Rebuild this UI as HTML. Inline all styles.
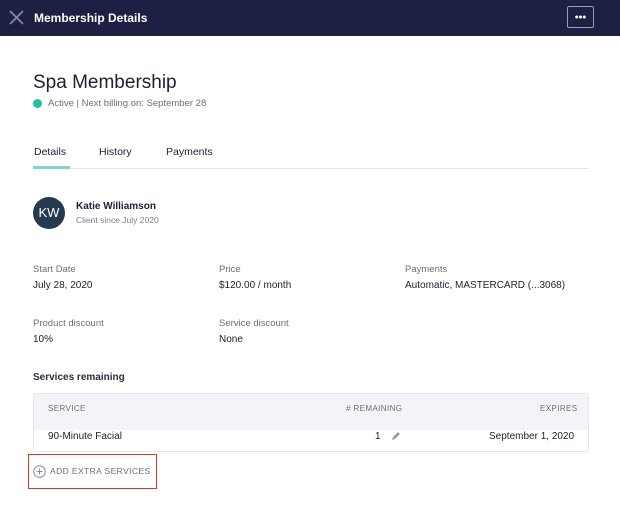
<!DOCTYPE html><html><head><style>
*{margin:0;padding:0;box-sizing:border-box}
body{width:620px;height:514px;background:#fff;font-family:"Liberation Sans",sans-serif;color:#1d1f33;position:relative;overflow:hidden}
.a{position:absolute;white-space:nowrap}
.lab{font-size:9.5px;color:#6b6e80}
.val{font-size:10px;color:#1d1f33}
</style></head><body>
<div class="a" style="left:0;top:0;width:620px;height:36px;background:#1d2042"></div>
<svg class="a" style="left:9px;top:10px" width="15" height="15" viewBox="0 0 15 15"><path d="M1 1L14 14M14 1L1 14" stroke="#8a8ca0" stroke-width="1.6"/></svg>
<div class="a" style="left:34px;top:11px;font-size:12px;font-weight:bold;color:#fff">Membership Details</div>
<div class="a" style="left:567px;top:6px;width:27px;height:22px;border:1px solid #9a9cb0;border-radius:2px"></div>
<svg class="a" style="left:575px;top:15px" width="11" height="4" viewBox="0 0 11 4"><circle cx="1.7" cy="2" r="1.5" fill="#fff"/><circle cx="5.5" cy="2" r="1.5" fill="#fff"/><circle cx="9.3" cy="2" r="1.5" fill="#fff"/></svg>
<div class="a" style="left:33px;top:72px;font-size:19px">Spa Membership</div>
<div class="a" style="left:33px;top:99px;width:9px;height:9px;border-radius:50%;background:#26c0a0"></div>
<div class="a" style="left:48px;top:98px;font-size:9.5px;color:#6b6e80">Active | Next billing on: September 28</div>
<div class="a" style="left:34px;top:146px;font-size:10.5px">Details</div>
<div class="a" style="left:99px;top:146px;font-size:10.5px">History</div>
<div class="a" style="left:166px;top:146px;font-size:10.5px">Payments</div>
<div class="a" style="left:33px;top:168px;width:556px;height:1px;background:#e6e7ec"></div>
<div class="a" style="left:33px;top:166px;width:37px;height:3px;background:#7fd3d3"></div>
<div class="a" style="left:33px;top:197px;width:32px;height:32px;border-radius:50%;background:#253a4e;color:#fff;font-size:13px;text-align:center;line-height:32px">KW</div>
<div class="a" style="left:76px;top:201px;font-size:10px;font-weight:bold">Katie Williamson</div>
<div class="a" style="left:76px;top:215px;font-size:8.5px;color:#7a7d90">Client since July 2020</div>
<div class="a lab" style="left:33px;top:264px">Start Date</div>
<div class="a val" style="left:33px;top:280px">July 28, 2020</div>
<div class="a lab" style="left:219px;top:264px">Price</div>
<div class="a val" style="left:219px;top:280px">$120.00 / month</div>
<div class="a lab" style="left:405px;top:264px">Payments</div>
<div class="a val" style="left:405px;top:280px">Automatic, MASTERCARD (...3068)</div>
<div class="a lab" style="left:33px;top:318px">Product discount</div>
<div class="a val" style="left:33px;top:334px">10%</div>
<div class="a lab" style="left:219px;top:318px">Service discount</div>
<div class="a val" style="left:219px;top:334px">None</div>
<div class="a" style="left:33px;top:372px;font-size:10px;font-weight:bold;color:#2a2c40">Services remaining</div>
<div class="a" style="left:33px;top:393px;width:556px;height:59px;border:1px solid #e6e7ec;border-radius:3px;overflow:hidden">
<div style="height:36px;background:#f3f4f7"></div></div>
<div class="a" style="left:48px;top:404px;font-size:8px;color:#6b6e80;letter-spacing:.4px">SERVICE</div>
<div class="a" style="left:346px;top:404px;font-size:8px;color:#6b6e80;letter-spacing:.4px">#&nbsp;REMAINING</div>
<div class="a" style="left:540px;top:404px;font-size:8px;color:#6b6e80;letter-spacing:.4px">EXPIRES</div>
<div class="a val" style="left:48px;top:431px">90-Minute Facial</div>
<div class="a val" style="left:375px;top:431px">1</div>
<svg class="a" style="left:390px;top:431px" width="11" height="11" viewBox="0 0 11 11"><path d="M2 9L3 6L8 1L10 3L5 8Z" fill="#9a9cab"/></svg>
<div class="a val" style="left:489px;top:431px">September 1, 2020</div>
<div class="a" style="left:28px;top:454px;width:129px;height:35px;border:1.5px solid #e8312a"></div>
<svg class="a" style="left:33px;top:465px" width="13" height="13" viewBox="0 0 13 13"><circle cx="6.5" cy="6.5" r="5.8" fill="none" stroke="#8a8ca0" stroke-width="1"/><path d="M6.5 3.5V9.5M3.5 6.5H9.5" stroke="#8a8ca0"/></svg>
<div class="a" style="left:50px;top:466px;font-size:8.5px;color:#6b6e80;letter-spacing:.4px">ADD EXTRA SERVICES</div>
</body></html>
